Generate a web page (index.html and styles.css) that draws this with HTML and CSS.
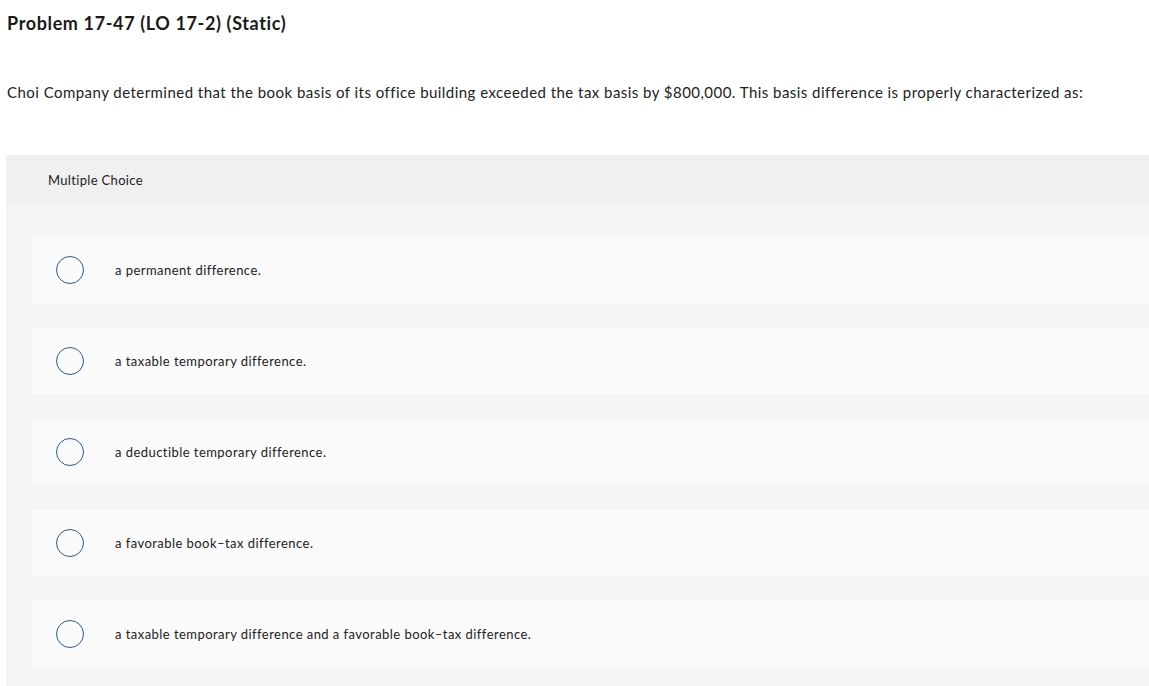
FILE: index.html
```html
<!DOCTYPE html>
<html lang="en">
<head>
<meta charset="utf-8">
<title>Problem 17-47</title>
<link rel="stylesheet" href="styles.css">
</head>
<body>
<h1 class="title">Problem 17-47 (LO 17-2) (Static)</h1>
<p class="question">Choi Company determined that the book basis of its office building exceeded the tax basis by $800,000. This basis difference is properly characterized as:</p>
<section class="panel">
  <div class="panel-head">Multiple Choice</div>
  <div class="choices">
    <label class="choice"><span class="radio"></span><span class="choice-text">a permanent difference.</span></label>
    <label class="choice"><span class="radio"></span><span class="choice-text">a taxable temporary difference.</span></label>
    <label class="choice"><span class="radio"></span><span class="choice-text">a deductible temporary difference.</span></label>
    <label class="choice"><span class="radio"></span><span class="choice-text">a favorable book–tax difference.</span></label>
    <label class="choice"><span class="radio"></span><span class="choice-text">a taxable temporary difference and a favorable book–tax difference.</span></label>
  </div>
</section>
</body>
</html>
```
FILE: styles.css
```css
html, body {
  margin: 0;
  padding: 0;
  background: #ffffff;
  overflow: hidden;
}
body {
  font-family: "Lato", "Liberation Sans", sans-serif;
  color: #222222;
  width: 1149px;
}
.title {
  margin: 0;
  padding: 11px 0 0 7px;
  font-size: 18px;
  font-weight: 700;
  letter-spacing: 0.63px;
  line-height: 24px;
  color: #1a1a1a;
}
.question {
  margin: 0;
  padding: 46px 0 0 7px;
  font-size: 15px;
  letter-spacing: 0.46px;
  line-height: 22px;
  color: #222;
}
.panel {
  margin: 52px 0 0 6px;
  background: #f5f5f5;
  padding-bottom: 30px;
}
.panel-head {
  height: 50px;
  background: #f0f0f0;
  padding-left: 42px;
  display: flex;
  align-items: center;
  font-size: 13px;
  letter-spacing: 0.33px;
  color: #222;
}
.choices {
  display: flex;
  flex-direction: column;
  gap: 25px;
  padding: 32px 0 0 26px;
}
.choice {
  height: 66px;
  background: #fafafa;
  display: flex;
  align-items: center;
}
.radio {
  width: 26px;
  height: 26px;
  border: 1.5px solid #2d5b8a;
  border-radius: 50%;
  margin-left: 24px;
  flex: none;
}
.choice-text {
  margin-left: 31px;
  font-size: 13px;
  letter-spacing: 0.45px;
  color: #222;
}
```
